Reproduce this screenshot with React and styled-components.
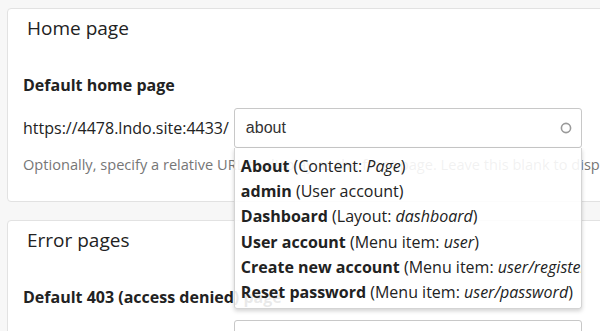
import React from 'react';
import styled, { createGlobalStyle } from 'styled-components';

const GlobalStyle = createGlobalStyle`
  html, body {
    margin: 0;
    padding: 0;
    background: #f7f7f7;
    overflow: hidden;
  }
  body {
    font-family: "Open Sans", "DejaVu Sans", sans-serif;
    color: #222;
  }
`;

const Page = styled.div`
  padding: 8px 0 0 7px;
  width: 640px;
`;

const Card = styled.section`
  background: #fff;
  border: 1px solid #e2e2e2;
  border-radius: 4px;
  padding: 8px 20px 27px 15px;
  margin-bottom: 18px;
`;

const Legend = styled.h2`
  margin: 0 0 0 4px;
  font-size: 19px;
  font-weight: 400;
  line-height: 22px;
`;

const Label = styled.div`
  margin-top: 36px;
  font-size: 16px;
  font-weight: 700;
  line-height: 20px;
`;

const Row = styled.div`
  display: flex;
  align-items: center;
  margin-top: 13px;
  gap: 5px;
`;

const Prefix = styled.span`
  font-size: 16px;
  line-height: 20px;
  white-space: nowrap;
`;

const Field = styled.div`
  position: relative;
  width: 348px;
  flex: none;
`;

const Input = styled.div`
  box-sizing: border-box;
  height: 40px;
  border: 1px solid #c8c8c8;
  border-radius: 3px;
  display: flex;
  align-items: center;
  justify-content: space-between;
  padding: 0 9px 0 11px;
  font-family: "Liberation Sans", Arial, sans-serif;
  font-size: 16px;
  color: #333;
  background: #fff;
`;

const Spinner = styled.svg`
  width: 12px;
  height: 12px;
  flex: none;
`;

const Description = styled.div`
  margin-top: 6px;
  font-size: 14.6px;
  line-height: 20px;
  color: #767676;
  white-space: nowrap;
`;

const Menu = styled.ul`
  position: absolute;
  top: 100%;
  left: 0;
  right: 0;
  margin: 0;
  padding: 6px 0 3px;
  list-style: none;
  background: rgba(255, 255, 255, 0.9);
  border: 1px solid #d4d4d4;
  border-top: none;
  border-radius: 0 0 3px 3px;
  box-shadow: 0 2px 4px rgba(0, 0, 0, 0.18);
  overflow: hidden;
  z-index: 5;
`;

const Item = styled.li`
  padding: 0 6px;
  font-size: 16px;
  line-height: 25.2px;
  white-space: nowrap;
  color: #222;

  b {
    font-weight: 700;
  }
  i {
    font-style: italic;
  }
`;

const items = [
  { name: 'About', kind: 'Content', value: 'Page' },
  { name: 'admin', kind: 'User account' },
  { name: 'Dashboard', kind: 'Layout', value: 'dashboard' },
  { name: 'User account', kind: 'Menu item', value: 'user' },
  { name: 'Create new account', kind: 'Menu item', value: 'user/register' },
  { name: 'Reset password', kind: 'Menu item', value: 'user/password' },
];

const App = () => {
  return (
    <>
      <GlobalStyle />
      <Page>
        <Card>
          <Legend>Home page</Legend>
          <Label>Default home page</Label>
          <Row>
            <Prefix>https://4478.lndo.site:4433/</Prefix>
            <Field>
              <Input>
                about
                <Spinner viewBox="0 0 12 12">
                  <circle cx="6" cy="6" r="4.6" fill="none" stroke="#9a9a9a" strokeWidth="1.6" />
                </Spinner>
              </Input>
              <Menu>
                {items.map((it) => (
                  <Item key={it.name}>
                    <b>{it.name}</b> ({it.kind}
                    {it.value && (
                      <>
                        : <i>{it.value}</i>
                      </>
                    )}
                    )
                  </Item>
                ))}
              </Menu>
            </Field>
          </Row>
          <Description>
            Optionally, specify a relative URL to display as the front page. Leave this blank to display the default front page.
          </Description>
        </Card>
        <Card>
          <Legend>Error pages</Legend>
          <Label>Default 403 (access denied) page</Label>
          <Row>
            <Prefix>https://4478.lndo.site:4433/</Prefix>
            <Field>
              <Input />
            </Field>
          </Row>
        </Card>
      </Page>
    </>
  );
};

export default App;
